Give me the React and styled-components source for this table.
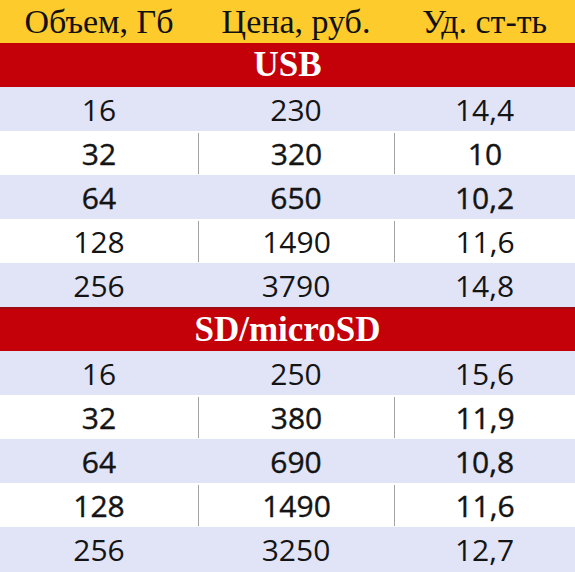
import React from 'react';
import styled, { createGlobalStyle } from 'styled-components';

const GlobalStyle = createGlobalStyle`
  html, body {
    margin: 0;
    padding: 0;
    background: #e1e3f7;
  }
`;

const Table = styled.div`
  width: 575px;
  display: flex;
  flex-direction: column;
`;

const HeaderRow = styled.div`
  display: grid;
  grid-template-columns: 198px 196px 1fr;
  height: 43px;
  background: #fdcb2b;
  font-family: "Liberation Serif", "Times New Roman", serif;
  font-size: 34px;
  color: #111;
`;

const HeaderCell = styled.div`
  display: flex;
  align-items: center;
  justify-content: center;
  padding-top: 1px;
`;

const SectionRow = styled.div`
  height: 44px;
  box-sizing: border-box;
  background: #c40009;
  border-top: ${(p) => (p.$edge ? '2px solid #9d0b17' : 'none')};
  display: flex;
  align-items: center;
  justify-content: center;
  color: #fff;
  font-family: "Liberation Serif", "Times New Roman", serif;
  font-weight: 700;
  font-size: 35px;
`;

const DataRow = styled.div`
  display: grid;
  grid-template-columns: 198px 196px 1fr;
  height: 44px;
  background: ${(p) => (p.$shaded ? '#e1e3f7' : '#ffffff')};
  font-family: "Open Sans", "Noto Sans", sans-serif;
  font-size: 30px;
  color: #141414;
  -webkit-text-stroke: ${(p) => (p.$heavy ? '0.4px #141414' : '0')};
`;

const DataCell = styled.div`
  display: flex;
  align-items: center;
  justify-content: center;
  border-left: ${(p) => (p.$line ? '1px solid #a3a3a3' : 'none')};
  margin: ${(p) => (p.$line ? '2px 0' : '0')};
`;

const usb = [
  ['16', '230', '14,4', false],
  ['32', '320', '10', true],
  ['64', '650', '10,2', true],
  ['128', '1490', '11,6', false],
  ['256', '3790', '14,8', false],
];

const sd = [
  ['16', '250', '15,6', false],
  ['32', '380', '11,9', true],
  ['64', '690', '10,8', true],
  ['128', '1490', '11,6', true],
  ['256', '3250', '12,7', false],
];

function Rows({ data }) {
  return data.map(([vol, price, unit, heavy], i) => {
    const shaded = i % 2 === 0;
    return (
      <DataRow key={vol} $shaded={shaded} $heavy={heavy}>
        <DataCell>{vol}</DataCell>
        <DataCell $line={!shaded}>{price}</DataCell>
        <DataCell $line={!shaded}>{unit}</DataCell>
      </DataRow>
    );
  });
}

export default function App() {
  return (
    <>
      <GlobalStyle />
      <Table>
        <HeaderRow>
          <HeaderCell>Объем, Гб</HeaderCell>
          <HeaderCell>Цена, руб.</HeaderCell>
          <HeaderCell>Уд. ст-ть</HeaderCell>
        </HeaderRow>
        <SectionRow>USB</SectionRow>
        <Rows data={usb} />
        <SectionRow $edge>SD/microSD</SectionRow>
        <Rows data={sd} />
      </Table>
    </>
  );
}
